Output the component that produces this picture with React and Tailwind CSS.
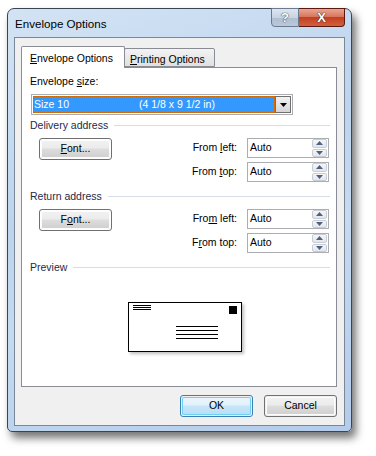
import React from 'react';

const font = { fontFamily: '"Liberation Sans", Arial, sans-serif' };

function U({ children }) {
  return <span className="underline underline-offset-[1px] decoration-[1px]">{children}</span>;
}

function SectionHeader({ label, className = '' }) {
  return (
    <div className={`flex items-center h-[14px] pr-[6px] ${className}`}>
      <span className="text-[#1e2a4a] leading-[14px]">{label}</span>
      <div className="flex-1 h-px bg-[#d7dde5] ml-[6px]" />
    </div>
  );
}

function WinButton({ children, isDefault = false, className = '' }) {
  return (
    <div
      className={`w-[73px] h-[22px] rounded-[3px] border ${
        isDefault ? 'border-[#3c7fb1]' : 'border-[#707070]'
      } p-px ${className}`}
    >
      <div
        className={`h-full rounded-[2px] flex items-center justify-center text-black ${
          isDefault
            ? 'bg-[linear-gradient(to_bottom,#eaf6fd_0%,#e1f1fb_45%,#c6e5f8_50%,#b8def6_100%)] shadow-[inset_0_0_0_1px_#6fd0f5]'
            : 'bg-[linear-gradient(to_bottom,#f2f2f2_0%,#ebebeb_45%,#dddddd_50%,#cfcfcf_100%)] shadow-[inset_0_0_0_1px_#fcfcfc]'
        }`}
      >
        {children}
      </div>
    </div>
  );
}

function Spin({ label }) {
  return (
    <div className="flex items-center h-[20px]">
      <span className="mr-[10px] text-black">{label}</span>
      <div className="w-[82px] h-[20px] border border-[#abadb3] bg-white flex items-center">
        <span className="flex-1 pl-[2px] text-black">Auto</span>
        <div className="w-[15px] h-[18px] mr-px flex flex-col gap-px">
          <div className="flex-1 rounded-[2px] border border-[#c8ccd4] bg-[linear-gradient(to_bottom,#f6f6f6,#e3e6ea)] flex items-center justify-center">
            <svg width="7" height="4" viewBox="0 0 7 4"><path d="M3.5 0L7 4H0z" fill="#4d6185" /></svg>
          </div>
          <div className="flex-1 rounded-[2px] border border-[#c8ccd4] bg-[linear-gradient(to_bottom,#f6f6f6,#e3e6ea)] flex items-center justify-center">
            <svg width="7" height="4" viewBox="0 0 7 4"><path d="M0 0H7L3.5 4z" fill="#4d6185" /></svg>
          </div>
        </div>
      </div>
    </div>
  );
}

function AddressGroup({ fontLabel, leftLabel, topLabel, className = '' }) {
  return (
    <div className={`flex pr-[7px] ${className}`}>
      <WinButton className="ml-[9px]">{fontLabel}</WinButton>
      <div className="ml-auto flex flex-col items-end gap-[4px]">
        <Spin label={leftLabel} />
        <Spin label={topLabel} />
      </div>
    </div>
  );
}

function Envelope() {
  return (
    <div className="ml-[98px] mt-[28px] w-[114px] h-[50px] border border-black bg-white shadow-[2px_2px_3px_rgba(0,0,0,0.25)] flex flex-col">
      <div className="flex justify-between px-[4px] pt-[2px]">
        <div className="flex flex-col gap-px w-[18px]">
          <div className="h-px bg-black" />
          <div className="h-px bg-black" />
          <div className="h-px bg-black" />
        </div>
        <div className="w-[8px] h-[8px] bg-black mt-px" />
      </div>
      <div className="ml-[47px] mt-[12px] w-[42px] flex flex-col gap-[3px]">
        <div className="h-px bg-black" />
        <div className="h-px bg-black" />
        <div className="h-px bg-black" />
        <div className="h-px bg-black" />
      </div>
    </div>
  );
}

export default function App() {
  return (
    <div className="w-[376px] h-[456px] bg-white overflow-hidden text-[10.5px]" style={font}>
      <div className="ml-[7px] mt-[8px] w-[345px] h-[424px] rounded-t-[7px] rounded-b-[5px] border border-[#3a4452] bg-[linear-gradient(160deg,#d3e3f4_0%,#bdd4ee_40%,#c6daf0_60%,#b3cceb_100%)] shadow-[4px_6px_9px_rgba(0,0,0,0.55)] flex flex-col">
        <div className="h-[28px] flex items-start pr-[6px]">
          <span className="pl-[7px] pt-[8px] text-[11.6px] text-black leading-[14px]">Envelope Options</span>
          <div className="ml-auto -mt-px flex">
            <div className="w-[28px] h-[19px] rounded-bl-[4px] border border-[#6b7a8f] bg-[linear-gradient(to_bottom,#dde6f0_0%,#c8d4e2_50%,#aebdd0_50%,#b9c8da_100%)] flex items-center justify-center">
              <span className="text-white font-bold text-[13px] leading-none [text-shadow:0_0_1px_#333,0_0_1px_#333]">?</span>
            </div>
            <div className="w-[46px] h-[19px] rounded-br-[4px] border border-l-0 border-[#5a1a10] bg-[linear-gradient(to_bottom,#e9a592_0%,#d8765d_45%,#c4401f_50%,#d06040_100%)] flex items-center justify-center">
              <span className="text-white font-bold text-[13px] leading-none [text-shadow:0_0_1px_#222,0_0_1px_#222]">X</span>
            </div>
          </div>
        </div>
        <div className="mx-[6px] h-[389px] border border-[#7a8796] bg-[#f0f0f0] pl-[6px] pt-[7px] flex flex-col">
          <div className="flex items-end h-[22px]">
            <div className="relative z-10 w-[104px] h-[22px] -mb-px border border-b-0 border-[#898c95] rounded-t-[2px] bg-white pl-[8px] pt-[4px] text-black">
              <U>E</U>nvelope Options
            </div>
            <div className="w-[91px] h-[19px] -ml-px border border-[#898c95] rounded-t-[2px] bg-[linear-gradient(to_bottom,#f3f3f3,#e0e0e0)] pl-[5px] pt-[3px] text-black">
              <U>P</U>rinting Options
            </div>
          </div>
          <div className="w-[316px] h-[320px] border border-[#898c95] bg-white pl-[8px] flex flex-col">
            <div className="mt-[6px] h-[14px] leading-[14px] text-black">
              Envelope <U>s</U>ize:
            </div>
            <div className="mt-[6px] ml-px w-[262px] h-[21px] border border-[#abadb3] bg-white p-px flex">
              <div className="flex-1 bg-[#3399ff] outline-1 outline-dotted outline-[#cc6600] -outline-offset-1 flex items-center text-white pl-[1px]">
                <span className="w-[105px]">Size 10</span>
                <span>(4 1/8 x 9 1/2 in)</span>
              </div>
              <div className="w-[16px] border border-[#707070] bg-[linear-gradient(to_bottom,#f2f2f2,#d5d5d5)] flex items-center justify-center">
                <svg width="7" height="4" viewBox="0 0 7 4"><path d="M0 0H7L3.5 4z" fill="#000" /></svg>
              </div>
            </div>
            <SectionHeader label="Delivery address" className="mt-[3px]" />
            <AddressGroup
              className="mt-[6px]"
              fontLabel={<><U>F</U>ont...</>}
              leftLabel={<>From <U>l</U>eft:</>}
              topLabel={<>From <U>t</U>op:</>}
            />
            <SectionHeader label="Return address" className="mt-[7px]" />
            <AddressGroup
              className="mt-[6px]"
              fontLabel={<>F<U>o</U>nt...</>}
              leftLabel={<>Fro<U>m</U> left:</>}
              topLabel={<>F<U>r</U>om top:</>}
            />
            <SectionHeader label="Preview" className="mt-[7px]" />
            <Envelope />
          </div>
          <div className="mt-[8px] flex justify-end gap-[11px] pr-[7px]">
            <WinButton isDefault>OK</WinButton>
            <WinButton>Cancel</WinButton>
          </div>
        </div>
      </div>
    </div>
  );
}
